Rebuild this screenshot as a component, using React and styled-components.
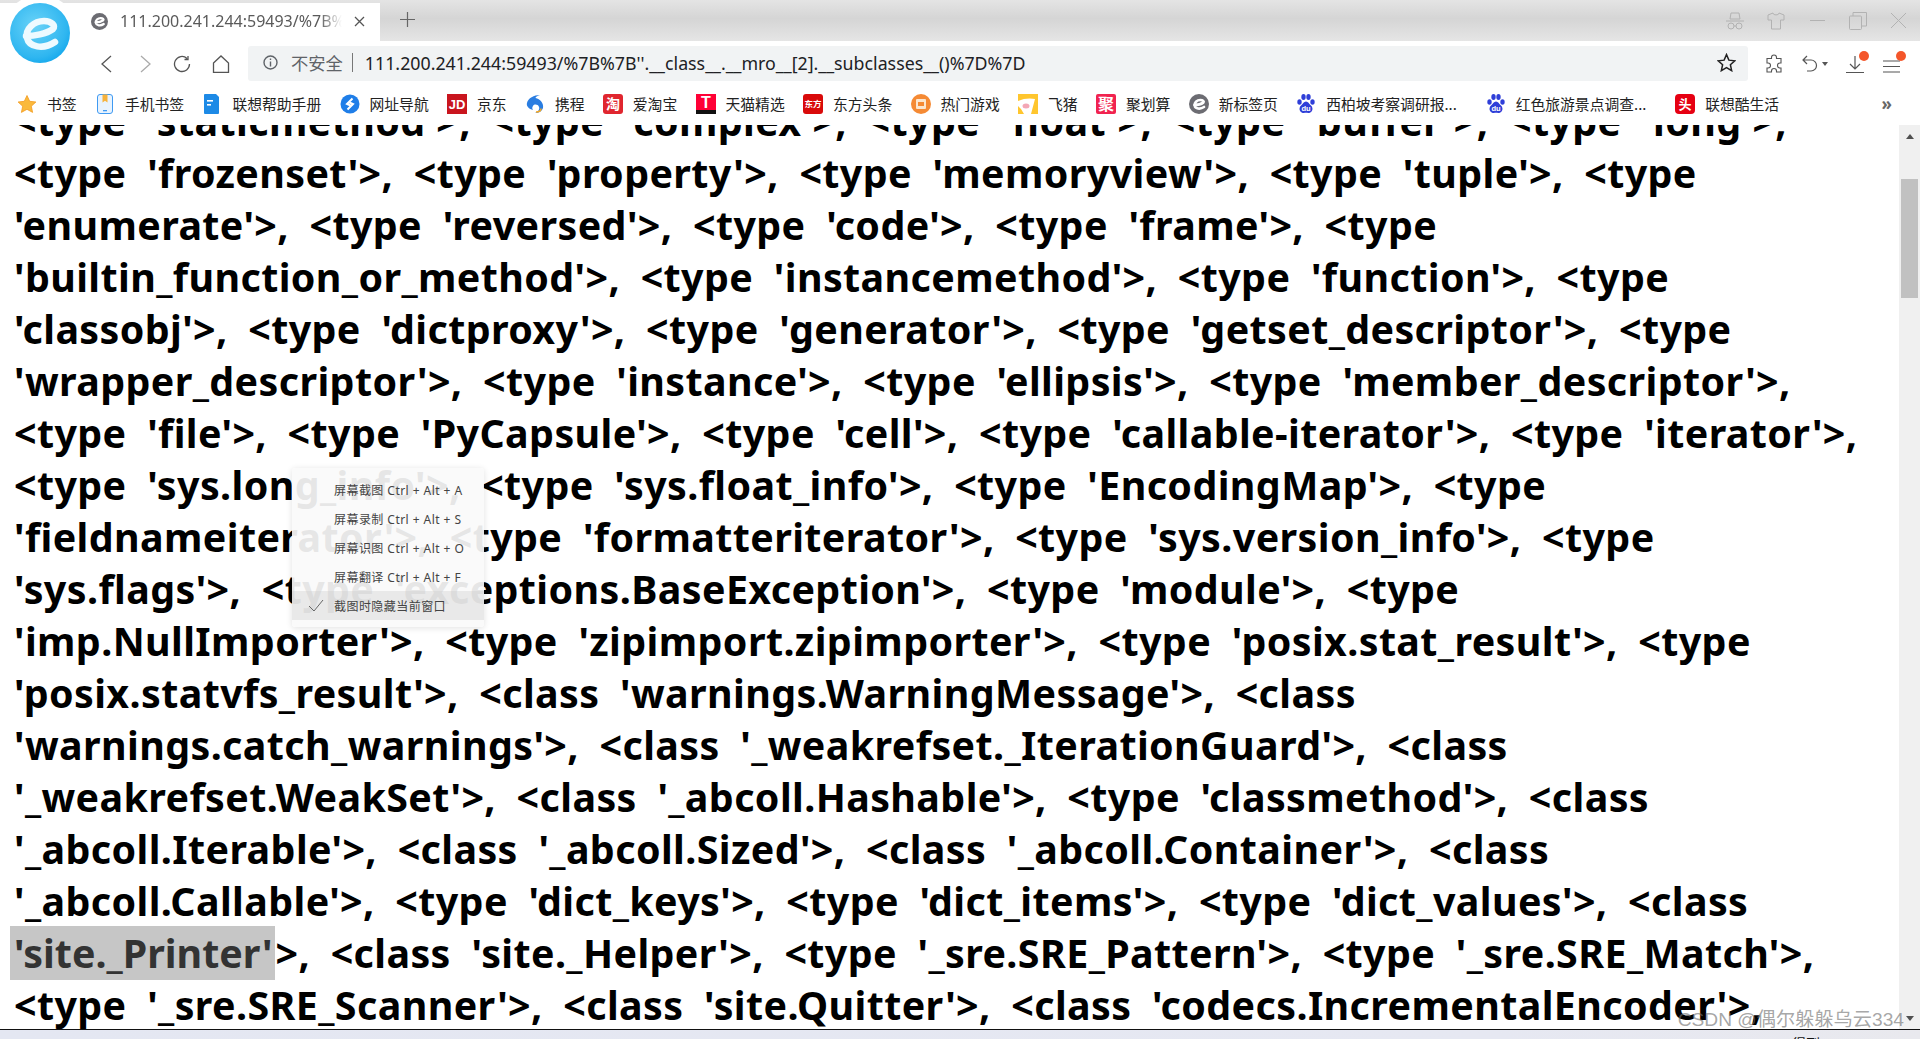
import React from 'react';
import styled, { createGlobalStyle } from 'styled-components';

const Global = createGlobalStyle`
  html, body { margin: 0; padding: 0; height: 100%; background: #fff; overflow: hidden; }
  #root { height: 100%; }
  * { box-sizing: border-box; }
`;
const UI = `"Noto Sans", "Noto Sans CJK SC", sans-serif`;
const Window = styled.div`
  position: relative; width: 1920px; height: 1039px; display: flex; flex-direction: column; overflow: hidden; background: #fff; font-family: ${UI};
`;
const TabBar = styled.div`
  height: 41px; flex: none; display: flex; align-items: stretch;
  background: linear-gradient(#e4e4e4, #d5d5d5 45%, #e5e5e5);
`;
const Tab = styled.div`
  width: 380px; background: #fff; display: flex; align-items: center; padding: 0 15px 2px 91px; margin-top: 3px; color: #555;
`;
const TabTitle = styled.span`
  margin: 0 12px; width: 222px; font-size: 16px; white-space: nowrap; overflow: hidden; color: #5a5a5a;
  mask-image: linear-gradient(90deg, #000 90%, transparent);
`;
const NewTab = styled.button`
  border: 0; background: none; padding: 0 0 2px; margin-left: 20px; width: 15px; display: flex; align-items: center; color: #666;
`;
const Caption = styled.div`
  margin-left: auto; display: flex; align-items: center; padding-right: 14px; color: #b2b2b2;
`;
const CaptionSlot = styled.span`
  display: flex; margin-left: ${p => p.$gap}px;
`;
const Toolbar = styled.div`
  height: 43px; flex: none; display: flex; align-items: center; padding: 2px 0 0 86px; background: #fff; color: #555;
`;
const NavButtons = styled.div`
  display: grid; grid-template-columns: 40px 40px 32px 45px; justify-items: center; align-items: center; margin-right: 5px;
`;
const Omnibox = styled.div`
  width: 1500px; height: 35px; background: #f1f3f4; border-radius: 3px; display: flex; align-items: center; padding: 0 12px 2px 15px;
`;
const Insecure = styled.span`
  color: #5f6368; font-size: 17.3px; margin-left: 13px; white-space: nowrap; font-family: "Noto Sans CJK SC", sans-serif;
`;
const Divider = styled.span`
  width: 1px; height: 19px; background: #777; margin: 0 12px 0 9px;
`;
const Url = styled.span`
  color: #202124; font-size: 17.8px; white-space: nowrap;
`;
const StarSlot = styled.span`
  margin-left: auto; display: flex; color: #222;
`;
const ToolIcons = styled.div`
  display: flex; align-items: center; margin-left: 16px; gap: 18px; color: #555;
`;
const ToolIcon = styled.span`
  position: relative; display: flex;
`;
const Badge = styled.span`
  position: absolute; top: -3px; right: -5px; width: 10px; height: 10px; border-radius: 50%; background: #f4562a;
`;
const Bookmarks = styled.div`
  height: 41px; flex: none; display: flex; align-items: center; padding: 0 0 2px 17px; background: #fff;
`;
const Mark = styled.div`
  display: flex; align-items: center; gap: 10px; margin-right: ${p => (p.$long ? 28.8 : 18.3)}px; font-size: 14.8px; color: #222; white-space: nowrap; font-family: "Noto Sans CJK SC", sans-serif;
`;
const More = styled.span`
  margin-left: auto; margin-right: 28px; color: #666; font-size: 17px; font-weight: 700;
`;
const Page = styled.div`
  flex: 1; min-height: 0; display: flex; background: #fff;
`;
const Content = styled.div`
  flex: 1; min-width: 0; overflow: hidden; position: relative; padding-left: 14px;
`;
const TextBlock = styled.div`
  margin-top: -30px; font-family: "Noto Sans", "Open Sans", sans-serif; font-weight: 700; font-size: 39.4px; line-height: 52px; letter-spacing: .4px; word-spacing: 10px; color: #000; white-space: pre;
`;
const Highlight = styled.mark`
  background: #c6c6c6; color: #333; padding: 0 3px 0 4px; margin-left: -4px; letter-spacing: 0;
`;
const Scrollbar = styled.div`
  width: 21px; flex: none; background: #f0f0f0; display: flex; flex-direction: column; align-items: center; padding: 9px 0 8px;
`;
const Thumb = styled.div`
  width: 17px; height: 119px; margin-top: 40px; background: #c1c1c1;
`;
const ArrowUp = styled.div`
  width: 0; height: 0; border-left: 4.5px solid transparent; border-right: 4.5px solid transparent; border-bottom: 5px solid #505050;
`;
const ArrowDown = styled.div`
  width: 0; height: 0; margin-top: auto; border-left: 4.5px solid transparent; border-right: 4.5px solid transparent; border-top: 5px solid #505050;
`;
const Status = styled.div`
  height: 10px; flex: none; border-top: 1px solid #111; overflow: hidden; padding-left: 1792px; font-size: 14px; line-height: 26px; color: #111; font-family: "Noto Sans CJK SC", sans-serif;
  background: linear-gradient(90deg, #e4e7f2, #e6e8f2 78%, #e9e9ee);
`;
const Logo = styled.div`
  position: absolute; left: 2px; top: -5px; width: 76px; height: 76px; border-radius: 50%; background: radial-gradient(circle, #fff 78%, rgba(255,255,255,0)); display: flex; align-items: center; justify-content: center;
`;
const Menu = styled.div`
  position: absolute; left: 292px; top: 468px; width: 192px; height: 159px; background: rgba(250,250,250,.92); border-radius: 3px; box-shadow: 0 1px 6px rgba(0,0,0,.12); padding-top: 7px; font-size: 12px; color: #444;
`;
const MenuRow = styled.div`
  height: 29px; display: flex; align-items: center; padding-left: 42px; position: relative; white-space: nowrap; letter-spacing: .45px;
  background: ${p => (p.$on ? 'rgba(200,200,200,.33)' : 'transparent')};
`;
const Check = styled.svg`
  position: absolute; left: 16px; top: 8px;
`;
const Watermark = styled.div`
  position: absolute; right: 16px; bottom: 7px; font-size: 19.2px; color: rgba(110,110,110,.62); white-space: nowrap; font-family: "Liberation Sans", "Noto Sans CJK SC", sans-serif;
`;

const lines = [
  `<type 'staticmethod'>, <type 'complex'>, <type 'float'>, <type 'buffer'>, <type 'long'>,`,
  `<type 'frozenset'>, <type 'property'>, <type 'memoryview'>, <type 'tuple'>, <type`,
  `'enumerate'>, <type 'reversed'>, <type 'code'>, <type 'frame'>, <type`,
  `'builtin_function_or_method'>, <type 'instancemethod'>, <type 'function'>, <type`,
  `'classobj'>, <type 'dictproxy'>, <type 'generator'>, <type 'getset_descriptor'>, <type`,
  `'wrapper_descriptor'>, <type 'instance'>, <type 'ellipsis'>, <type 'member_descriptor'>,`,
  `<type 'file'>, <type 'PyCapsule'>, <type 'cell'>, <type 'callable-iterator'>, <type 'iterator'>,`,
  `<type 'sys.long_info'>, <type 'sys.float_info'>, <type 'EncodingMap'>, <type`,
  `'fieldnameiterator'>, <type 'formatteriterator'>, <type 'sys.version_info'>, <type`,
  `'sys.flags'>, <type 'exceptions.BaseException'>, <type 'module'>, <type`,
  `'imp.NullImporter'>, <type 'zipimport.zipimporter'>, <type 'posix.stat_result'>, <type`,
  `'posix.statvfs_result'>, <class 'warnings.WarningMessage'>, <class`,
  `'warnings.catch_warnings'>, <class '_weakrefset._IterationGuard'>, <class`,
  `'_weakrefset.WeakSet'>, <class '_abcoll.Hashable'>, <type 'classmethod'>, <class`,
  `'_abcoll.Iterable'>, <class '_abcoll.Sized'>, <class '_abcoll.Container'>, <class`,
  `'_abcoll.Callable'>, <type 'dict_keys'>, <type 'dict_items'>, <type 'dict_values'>, <class`,
];

const Ico = ({ w = 16, h = 16, children, vb, ...r }) => (
  <svg width={w} height={h} viewBox={vb || `0 0 ${w} ${h}`} fill="none" stroke="currentColor" {...r}>{children}</svg>
);
const Square = ({ bg, r = 2, label, fs = 8, color = '#fff' }) => (
  <svg width="20" height="20" viewBox="0 0 20 20">
    <rect width="20" height="20" rx={r} fill={bg} />
    <text x="10" y="10" dy=".36em" textAnchor="middle" fontSize={fs} fontWeight="700" fill={color} fontFamily="Liberation Sans, Noto Sans CJK SC, sans-serif">{label}</text>
  </svg>
);
const EGlyph = 'M16 33C24 33 36 31 43 26C46 23 42 18 34 18C24 18 15 26 17 35C19 44 33 47 45 39';
const EIcon = ({ size = 20, fill = '#6c6c72' }) => (
  <svg width={size} height={size} viewBox="0 0 60 60">
    <circle cx="30" cy="30" r="30" fill={fill} />
    <path d={EGlyph} fill="none" stroke="#fff" strokeWidth="8" strokeLinecap="round" />
  </svg>
);
const Paw = () => (
  <svg width="20" height="20" viewBox="0 0 20 20" fill="#2f3fd8">
    <ellipse cx="3.5" cy="8" rx="2.2" ry="2.7" /><ellipse cx="7.5" cy="3" rx="2.2" ry="2.9" /><ellipse cx="12.5" cy="3" rx="2.2" ry="2.9" /><ellipse cx="16.5" cy="8" rx="2.2" ry="2.7" />
    <path d="M10 7.5c-2.4 0-2.8 2.3-4.7 3.7-2 1.6-2.3 4.3-1.1 6C6 19.5 8.3 18.8 10 18.8s4 .7 5.8-1.6c1.2-1.7.9-4.4-1.1-6C12.8 9.8 12.4 7.5 10 7.5z" />
    <text x="10" y="17" textAnchor="middle" fontSize="7.5" fontWeight="700" fill="#fff" fontFamily="Liberation Sans, sans-serif">du</text>
  </svg>
);
const MARKS = [
  ['书签', <svg width="20" height="20" viewBox="0 0 20 20"><path d="M10 1.5l2.7 5.8 6.2.7-4.6 4.2 1.3 6.2L10 15.3 4.4 18.4l1.3-6.2L1.1 8l6.2-.7z" fill="#fab93c" stroke="#f39a1f" strokeWidth=".8"/></svg>],
  ['手机书签', <svg width="20" height="20" viewBox="0 0 20 20"><rect x="2.5" y=".5" width="15" height="19" rx="2.5" fill="#e8f3fe" stroke="#3f9af2"/><path d="M7.5 .5h5v8L10 6.8 7.5 8.5z" fill="#f7b23b"/><rect x="8" y="16" width="4" height="1.3" fill="#3f9af2"/></svg>],
  ['联想帮助手册', <svg width="20" height="20" viewBox="0 0 20 20"><path d="M3 0h11l3 3v16a1 1 0 0 1-1 1H3a1 1 0 0 1-1-1V1a1 1 0 0 1 1-1z" fill="#1d8ae6"/><rect x="5" y="6" width="6" height="1.6" fill="#fff"/><rect x="5" y="10" width="4" height="1.6" fill="#fff"/></svg>],
  ['网址导航', <svg width="20" height="20" viewBox="0 0 20 20"><circle cx="10" cy="10" r="9.5" fill="#1f7ee8"/><path d="M12.5 4.5L7 10l3.5 1.5M7.5 15.5L13 10 9.5 8.5" fill="none" stroke="#fff" strokeWidth="2"/></svg>],
  ['京东', <Square bg="#c9151e" r={0} label="JD" fs={13} />],
  ['携程', <svg width="20" height="20" viewBox="0 0 20 20"><path d="M2 9c1-5 7-8 13-8-3 1-4.5 2-4.5 3 4.5 1 8.5 5 7.5 10-1 3-4 5-8 5 3-1 5-4 4-6-1-3-5-3-6-1-1 1-1 3 0 4-4-1-7-4-6-7z" fill="#2a7de1"/><path d="M11 18c2.5 0 5-1 5-3.5" stroke="#f7a823" strokeWidth="1.5" fill="none"/></svg>],
  ['爱淘宝', <Square bg="#e0262f" r={3} label="淘" fs={14} />],
  ['天猫精选', <svg width="20" height="20" viewBox="0 0 20 20"><rect width="20" height="16" fill="#ff0036"/><rect width="20" height="4" y="16" fill="#111"/><text x="10" y="13.5" textAnchor="middle" fontSize="16" fontWeight="700" fill="#fff" fontFamily="Liberation Sans, sans-serif">T</text></svg>],
  ['东方头条', <Square bg="#d90a0a" r={3} label="东方" fs={8.5} />],
  ['热门游戏', <svg width="20" height="20" viewBox="0 0 20 20"><circle cx="10" cy="10" r="10" fill="#f58a34"/><rect x="5" y="5" width="10" height="10" rx="1" fill="#fbe6cf"/><rect x="7" y="8" width="6" height="4" fill="#f58a34"/></svg>],
  ['飞猪', <svg width="20" height="20" viewBox="0 0 20 20"><rect width="20" height="20" fill="#ffc62e"/><path d="M0 7c6-3 13-3 17-2l-4 15H6l-3-5-3-3z" fill="#fff"/><ellipse cx="8" cy="12" rx="3.5" ry="2.5" fill="#f4a7b5"/></svg>],
  ['聚划算', <Square bg="#f1234f" r={2} label="聚" fs={16} />],
  ['新标签页', <EIcon />],
  ['西柏坡考察调研报...', <Paw />, true],
  ['红色旅游景点调查...', <Paw />, true],
  ['联想酷生活', <Square bg="#e60012" r={4} label="头" fs={13} />],
];

export default function App() {
  return (
    <Window>
      <Global />
      <TabBar>
        <Tab>
          <EIcon size={17} />
          <TabTitle>111.200.241.244:59493/%7B%7B''.__class__</TabTitle>
          <Ico w={11} h={11} strokeWidth="1.3"><path d="M1 1l9 9M10 1l-9 9" /></Ico>
        </Tab>
        <NewTab aria-label="new tab"><Ico w={15} h={15} strokeWidth="1.2"><path d="M7.5 0v15M0 7.5h15" /></Ico></NewTab>
        <Caption>
          <CaptionSlot $gap={0}><Ico w={18} h={18}><path d="M4 7h10l-1-6H5zM0 9h18" /><circle cx="5" cy="14" r="3"/><circle cx="13" cy="14" r="3"/><path d="M8 14h2"/></Ico></CaptionSlot>
          <CaptionSlot $gap={23}><Ico w={18} h={18}><path d="M6 1L1 3v5h3.5v9h9V8H17V3l-5-2c0 2.5-6 2.5-6 0z" /></Ico></CaptionSlot>
          <CaptionSlot $gap={25}><Ico w={15} h={15}><path d="M0 7.5h15" /></Ico></CaptionSlot>
          <CaptionSlot $gap={24}><Ico w={18} h={18}><rect x=".5" y="4" width="12" height="13.5" rx="1"/><path d="M4 4V.5h13.5V14H13"/></Ico></CaptionSlot>
          <CaptionSlot $gap={24}><Ico w={15} h={15}><path d="M0 0l15 15M15 0L0 15" /></Ico></CaptionSlot>
        </Caption>
      </TabBar>
      <Toolbar>
        <NavButtons>
          <Ico w={12} h={18} strokeWidth="1.3"><path d="M11 1L2 9l9 8" /></Ico>
          <Ico w={12} h={18} strokeWidth="1.3" stroke="#aaa"><path d="M1 1l9 8-9 8" /></Ico>
          <Ico w={18} h={18} strokeWidth="1.3"><path d="M16.5 9a7.5 7.5 0 1 1-2.5-5.6M15 1v3.5h-3.5" /></Ico>
          <Ico w={18} h={18} strokeWidth="1.3"><path d="M1.5 8L9 1l7.5 7v9.5h-15z" /></Ico>
        </NavButtons>
        <Omnibox>
          <Ico w={15} h={15} strokeWidth="1.4"><circle cx="7.5" cy="7.5" r="6.5" stroke="#5f6368"/><path d="M7.5 6.5v5M7.5 3.5V5" stroke="#5f6368"/></Ico>
          <Insecure>不安全</Insecure>
          <Divider />
          <Url>111.200.241.244:59493/%7B%7B''.__class__.__mro__[2].__subclasses__()%7D%7D</Url>
          <StarSlot><Ico w={19} h={19} vb="0 0 24 24" strokeWidth="1.9"><path d="M12 2l3 7 7.5.8-5.6 5 1.6 7.5L12 18.5 5.5 22.3l1.6-7.5-5.6-5L9 9z" /></Ico></StarSlot>
        </Omnibox>
        <ToolIcons>
          <ToolIcon><Ico w={20} h={20} strokeWidth="1.1"><path d="M7.5 3.5a2.5 2.5 0 0 1 5 0v1H17V9h-1a2.5 2.5 0 0 0 0 5h1v4h-4.5v-1a2.5 2.5 0 0 0-5 0v1H3v-4h1a2.5 2.5 0 0 0 0-5H3V4.500h4.500z"/></Ico></ToolIcon>
          <ToolIcon><Ico w={26} h={18} strokeWidth="1.2"><path d="M5 1L1 5l4 4M1 5h8a5.5 5.5 0 0 1 0 11H5" /><path d="M20 7h6l-3 4z" fill="#555" stroke="none" /></Ico></ToolIcon>
          <ToolIcon><Ico w={18} h={20} strokeWidth="1.2"><path d="M9 2v13M4 10l5 5 5-5M0 18.5h18" /></Ico><Badge /></ToolIcon>
          <ToolIcon><Ico w={19} h={20} strokeWidth="1.2"><path d="M1 7h17M1 12.5h17M1 18h17" /></Ico><Badge /></ToolIcon>
        </ToolIcons>
      </Toolbar>
      <Bookmarks>
        {MARKS.map(([t, ic, long]) => (
          <Mark key={t} $long={long}>{ic}<span>{t}</span></Mark>
        ))}
        <More>»</More>
      </Bookmarks>
      <Page>
        <Content>
          <TextBlock>
            {lines.map(l => l + '\n').join('')}
            <Highlight>'site._Printer'</Highlight>{`>, <class 'site._Helper'>, <type '_sre.SRE_Pattern'>, <type '_sre.SRE_Match'>,\n`}
            {`<type '_sre.SRE_Scanner'>, <class 'site.Quitter'>, <class 'codecs.IncrementalEncoder'>,`}
          </TextBlock>
        </Content>
        <Scrollbar><ArrowUp /><Thumb /><ArrowDown /></Scrollbar>
      </Page>
      <Status>得到</Status>
      <Logo>
        <svg width="60" height="60" viewBox="0 0 60 60">
          <defs><radialGradient id="g" cx=".42" cy=".38" r=".7"><stop offset="0" stopColor="#6ad3f8"/><stop offset=".75" stopColor="#2fb6f0"/><stop offset="1" stopColor="#0ea5ec"/></radialGradient></defs>
          <circle cx="30" cy="30" r="30" fill="url(#g)"/>
          <path d={EGlyph} fill="none" stroke="#eefaff" strokeWidth="6.5" strokeLinecap="round"/>
        </svg>
      </Logo>
      <Menu>
        <MenuRow>屏幕截图 Ctrl + Alt + A</MenuRow>
        <MenuRow>屏幕录制 Ctrl + Alt + S</MenuRow>
        <MenuRow>屏幕识图 Ctrl + Alt + O</MenuRow>
        <MenuRow>屏幕翻译 Ctrl + Alt + F</MenuRow>
        <MenuRow $on>
          <Check width="16" height="13" viewBox="0 0 16 13" fill="none" stroke="#666" strokeWidth="1"><path d="M1 7l5 5L15 1" /></Check>
          截图时隐藏当前窗口
        </MenuRow>
      </Menu>
      <Watermark>CSDN @偶尔躲躲乌云334</Watermark>
    </Window>
  );
}
